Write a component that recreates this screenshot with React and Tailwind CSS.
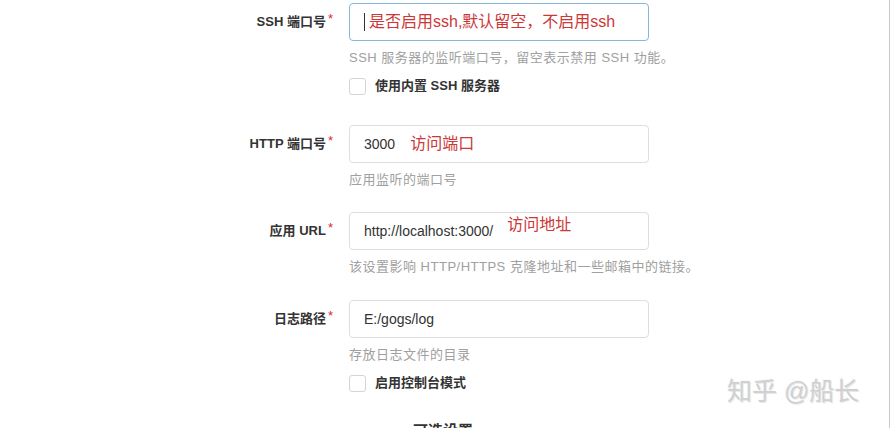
import React from "react";

const font = { fontFamily: '"Liberation Sans", "Noto Sans CJK SC", sans-serif' };

const Label = ({ children }) => (
    <div className="w-[349px] h-[38px] pr-[16px] flex items-center justify-end shrink-0">
        <span className="text-[13px] font-bold text-[#333]">{children}</span>
        <span className="text-[13px] text-[#db2828] ml-[2px] -mt-[6px]">*</span>
    </div>
);

const Input = ({ focus, children }) => (
    <div
        className={`w-[300px] h-[38px] rounded-[4px] border flex items-center px-[14px] text-[14px] text-[#333] bg-white ${
            focus ? "border-[#85b7d9]" : "border-[#dedede]"
        }`}
    >
        {children}
    </div>
);

const Help = ({ children }) => (
    <div className="mt-[8px] text-[13px] leading-[18px] tracking-[0.5px] text-[#a0a0a0] whitespace-nowrap">
        {children}
    </div>
);

const Check = ({ children }) => (
    <div className="mt-[10px] h-[18px] flex items-center">
        <div className="w-[17px] h-[17px] rounded-[3px] border border-[#d4d4d5] bg-white" />
        <span className="ml-[9px] text-[13px] font-bold text-[#333]">{children}</span>
    </div>
);

const Note = ({ children, className = "" }) => (
    <span className={`text-[#cc3838] whitespace-nowrap ${className}`}>{children}</span>
);

export default function App() {
    return (
        <div
            className="relative w-[890px] h-[428px] overflow-hidden bg-white border-r border-[#c8c8c8]"
            style={font}
        >
            <div className="pt-[3px]">
                {/* SSH port */}
                <div className="flex">
                    <Label>SSH 端口号</Label>
                    <div className="w-[300px]">
                        <Input focus>
                            <span className="w-[1px] h-[18px] bg-[#333] mr-[4px]" />
                            <Note className="text-[16px]">是否启用ssh,默认留空，不启用ssh</Note>
                        </Input>
                        <Help>SSH 服务器的监听端口号，留空表示禁用 SSH 功能。</Help>
                        <Check>使用内置 SSH 服务器</Check>
                    </div>
                </div>

                {/* HTTP port */}
                <div className="flex mt-[30px]">
                    <Label>HTTP 端口号</Label>
                    <div className="w-[300px]">
                        <Input>
                            <span>3000</span>
                            <Note className="ml-[15px] text-[16px]">访问端口</Note>
                        </Input>
                        <Help>应用监听的端口号</Help>
                    </div>
                </div>

                {/* App URL */}
                <div className="flex mt-[23px]">
                    <Label>应用 URL</Label>
                    <div className="w-[300px]">
                        <Input>
                            <span>http://localhost:3000/</span>
                            <Note className="ml-[14px] text-[16px] -mt-[12px]">访问地址</Note>
                        </Input>
                        <Help>该设置影响 HTTP/HTTPS 克隆地址和一些邮箱中的链接。</Help>
                    </div>
                </div>

                {/* Log path */}
                <div className="flex mt-[24px]">
                    <Label>日志路径</Label>
                    <div className="w-[300px]">
                        <Input>
                            <span>E:/gogs/log</span>
                        </Input>
                        <Help>存放日志文件的目录</Help>
                        <Check>启用控制台模式</Check>
                    </div>
                </div>

                <div className="mt-[28px] pl-[413px] text-[15px] font-bold text-[#333]">可选设置</div>
            </div>

            {/* watermark */}
            <div
                className="absolute left-[727px] top-[373px] text-[25px] text-[#d0d0d0] whitespace-nowrap"
                style={{ textShadow: "1px 1px 0 #e8e8e8, -1px -1px 0 #fafafa" }}
            >
                知乎 @船长
            </div>
        </div>
    );
}
